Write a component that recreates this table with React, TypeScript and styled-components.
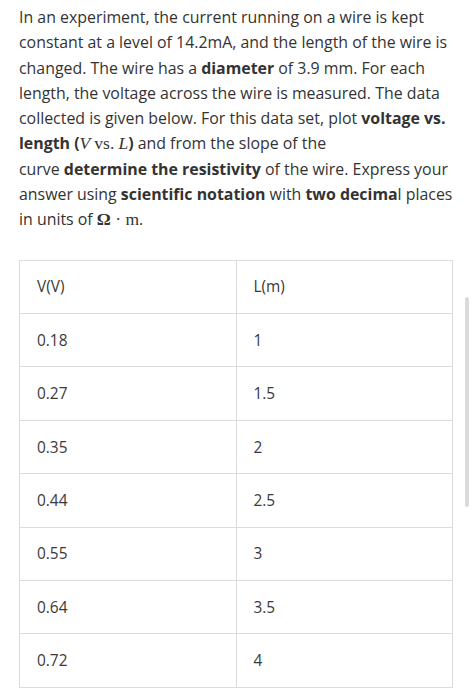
import styled, { createGlobalStyle } from 'styled-components';

const GlobalStyle = createGlobalStyle`
  body {
    margin: 0;
    background: #ffffff;
    font-family: "Open Sans", "Liberation Sans", sans-serif;
    color: #333333;
  }
`;

const Page = styled.div`
  position: relative;
  width: 472px;
  height: 700px;
  padding: 5px 15px 0 19px;
  box-sizing: border-box;
  overflow: hidden;
`;

const Question = styled.p`
  margin: 0;
  font-size: 15.9px;
  line-height: 25.3px;
  b {
    font-weight: 700;
  }
`;

const MathInline = styled.span<{ $italic?: boolean; $bold?: boolean }>`
  font-family: "Liberation Serif", "DejaVu Serif", serif;
  font-size: 17.5px;
  line-height: 1;
  font-style: ${({ $italic }) => ($italic ? 'italic' : 'normal')};
  font-weight: ${({ $bold }) => ($bold ? 700 : 400)};
`;

const TableWrap = styled.div`
  margin-top: 27px;
`;

const DataTable = styled.table`
  width: 434px;
  border-collapse: collapse;
  border: 1.5px solid #dcdcdc;
  font-size: 15.4px;
`;

const Cell = styled.td`
  width: 50%;
  height: 52.4px;
  padding: 0 17px;
  border: 1px solid #dcdcdc;
  vertical-align: middle;
  color: #3a3a3a;
`;

const ScrollThumb = styled.div`
  position: absolute;
  left: 465px;
  top: 297px;
  width: 4px;
  height: 210px;
  border-radius: 3px;
  background: #dadada;
`;

const rows: [string, string][] = [
  ['V(V)', 'L(m)'],
  ['0.18', '1'],
  ['0.27', '1.5'],
  ['0.35', '2'],
  ['0.44', '2.5'],
  ['0.55', '3'],
  ['0.64', '3.5'],
  ['0.72', '4'],
];

const App = () => {
  return (
    <>
      <GlobalStyle />
      <Page>
        <Question>
          In an experiment, the current running on a wire is kept constant at a
          level of 14.2mA, and the length of the wire is changed. The wire has a{' '}
          <b>diameter</b> of 3.9 mm. For each length, the voltage across the
          wire is measured. The data collected is given below. For this data
          set, plot <b>voltage vs. length (</b>
          <MathInline $italic>V</MathInline> <MathInline>vs.</MathInline>{' '}
          <MathInline $italic>L</MathInline>
          <b>)</b> and from the slope of the
          <br />
          curve <b>determine the resistivity</b> of the wire. Express your
          answer using <b>scientific notation</b> with <b>two decima</b>l places
          in units of <MathInline $bold>Ω</MathInline>
          <MathInline> · m</MathInline>.
        </Question>
        <TableWrap>
          <DataTable>
            <tbody>
              {rows.map(([v, l]) => (
                <tr key={v}>
                  <Cell>{v}</Cell>
                  <Cell>{l}</Cell>
                </tr>
              ))}
            </tbody>
          </DataTable>
        </TableWrap>
        <ScrollThumb />
      </Page>
    </>
  );
};

export default App;
